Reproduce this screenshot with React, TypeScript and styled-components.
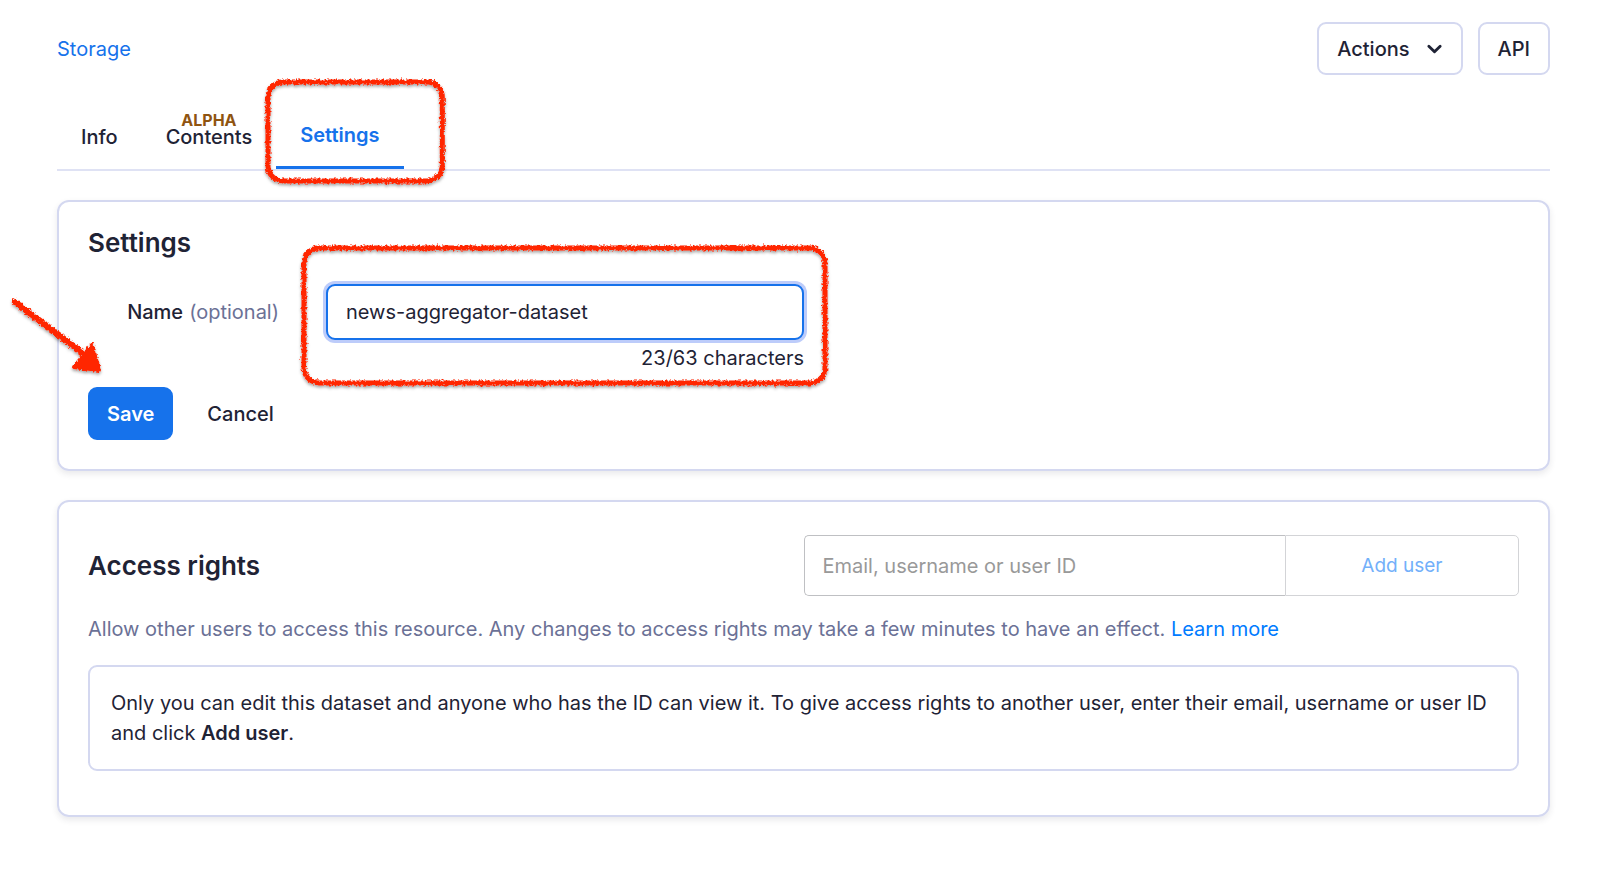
import React, { useState } from "react";
import styled, { createGlobalStyle, css } from "styled-components";

const ink = "#1f2335";
const muted = "#6b7196";
const blue = "#1672eb";
const line = "#d4d8f0";
const red = "#ff2600";

const GlobalStyle = createGlobalStyle`
  *, *::before, *::after { box-sizing: border-box; }
  body {
    margin: 0;
    background: #fff;
    color: ${ink};
    font: 400 20px/30px Inter, "Liberation Sans", sans-serif;
  }
  button, input { font: inherit; color: inherit; }
  h2, p { margin: 0; }
  a { text-decoration: none; }
`;

const Page = styled.main`
  padding: 22px 50px 32px 57px;
`;

const TopBar = styled.header`
  display: flex;
  align-items: center;
  justify-content: space-between;
`;

const TextLink = styled.a<{ $bright?: boolean }>`
  color: ${(p) => (p.$bright ? "#007bff" : blue)};
`;

const ButtonRow = styled.div<{ $gap: number }>`
  display: flex;
  gap: ${(p) => p.$gap}px;
`;

const FormActions = styled(ButtonRow)`
  margin-top: 14px;
`;

const variants = {
  outline: css`
    background: #fff;
    border-color: ${line};
  `,
  primary: css`
    background: ${blue};
    border-color: ${blue};
    color: #fff;
    font-weight: 600;
    padding: 0 17px;
  `,
  plain: css`
    background: none;
    border-color: transparent;
    padding: 0 14px;
  `,
};

const Button = styled.button<{ $variant: keyof typeof variants }>`
  display: flex;
  align-items: center;
  gap: 16px;
  height: 53px;
  padding: 0 18px;
  border: 2px solid;
  border-radius: 9px;
  font-weight: 500;
  cursor: pointer;
  ${(p) => variants[p.$variant]}
`;

const Chevron = styled.svg`
  width: 17px;
  height: 12px;
`;

const Tabs = styled.nav`
  display: flex;
  margin-top: 20px;
  border-bottom: 2px solid #dfe2f4;
`;

const Tab = styled.a<{ $active?: boolean }>`
  position: relative;
  display: flex;
  flex-direction: column;
  align-items: center;
  justify-content: flex-end;
  height: 74px;
  padding: 0 24px ${(p) => (p.$active ? 16 : 17)}px;
  color: ${(p) => (p.$active ? blue : ink)};
  border-bottom: ${(p) => (p.$active ? `3px solid ${blue}` : "0")};
  font-weight: ${(p) => (p.$active ? 600 : 500)};
`;

const TabText = styled.span`
  line-height: 20px;
  padding-bottom: 5px;
`;

const Badge = styled.span`
  margin-bottom: -1px;
  color: #8f5410;
  font-size: 16px;
  line-height: 16px;
  font-weight: 700;
`;

const Card = styled.section<{ $top: number }>`
  position: relative;
  margin-top: 29px;
  padding: ${(p) => p.$top}px 29px 29px;
  border: 2px solid ${line};
  border-radius: 12px;
  box-shadow: 0 3px 6px rgba(40, 40, 60, 0.1);
`;

const Title = styled.h2`
  font-size: 26px;
  line-height: 36px;
  font-weight: 600;
`;

const FieldRow = styled.div`
  display: grid;
  grid-template-columns: 191px 478px;
  column-gap: 47px;
  margin-top: 23px;
`;

const Label = styled.label`
  display: flex;
  align-items: center;
  justify-content: flex-end;
  gap: 6px;
  height: 56px;
  font-weight: 500;
`;

const Optional = styled.span`
  color: ${muted};
  font-weight: 400;
`;

const Field = styled.div`
  position: relative;
`;

const NameInput = styled.input`
  display: block;
  width: 100%;
  height: 56px;
  padding: 0 18px;
  border: 2px solid ${blue};
  border-radius: 9px;
  outline: 0;
  box-shadow: 0 0 0 3px #bdccfa;
`;

const Counter = styled.p`
  margin-top: 3px;
  text-align: right;
`;

const AccessHead = styled.div`
  display: grid;
  grid-template-columns: 1fr 1fr;
  align-items: center;
`;

const InviteForm = styled.form`
  display: grid;
  grid-template-columns: 481fr 234fr;
  height: 61px;
`;

const InviteInput = styled.input`
  min-width: 0;
  padding: 0 18px;
  border: 1px solid #bfc0c3;
  border-right: 0;
  border-radius: 5px 0 0 5px;
  &::placeholder { color: #999; opacity: 1; }
`;

const InviteButton = styled.button`
  border: 1px solid #d3d4d7;
  border-radius: 0 5px 5px 0;
  background: #fff;
  color: #73b0fa;
  font-size: 19px;
`;

const Description = styled.p`
  margin-top: 18px;
  color: ${muted};
`;

const Notice = styled.div`
  margin: 21px 0 15px;
  padding: 21px;
  border: 2px solid ${line};
  border-radius: 9px;
  min-height: 106px;
`;

const Strong = styled.strong`
  font-weight: 600;
`;

const frames = {
  tab: css`
    inset: -18px -44px -20px -13px;
  `,
  field: css`
    inset: -41px -26px -15px -27px;
  `,
};

const FrameBox = styled.span<{ $around: keyof typeof frames }>`
  position: absolute;
  ${(p) => frames[p.$around]}
  pointer-events: none;
  svg {
    display: block;
    width: 100%;
    height: 100%;
    overflow: visible;
  }
  rect {
    x: 5px;
    y: 5px;
    width: calc(100% - 10px);
    height: calc(100% - 10px);
  }
`;

const Arrow = styled.svg`
  position: absolute;
  left: -51px;
  top: 90px;
  width: 100px;
  height: 90px;
  overflow: visible;
  pointer-events: none;
`;

const Filters = styled.svg`
  position: absolute;
  width: 0;
  height: 0;
`;

/* Rough crayon edge and a soft drop shadow, shared by the frames and the arrow. */
function Crayon() {
  return (
    <Filters aria-hidden="true">
      <filter id="crayon" filterUnits="userSpaceOnUse" x="-10" y="-10" width="700" height="300">
        <feTurbulence type="fractalNoise" baseFrequency="0.45" numOctaves="2" seed="4" result="noise" />
        <feDisplacementMap in="SourceGraphic" in2="noise" scale="5" xChannelSelector="R" yChannelSelector="G" result="rough" />
        <feDropShadow in="rough" dx="0" dy="2" stdDeviation="1.5" floodColor="#000" floodOpacity="0.35" />
      </filter>
    </Filters>
  );
}

function HandFrame({ around }: { around: keyof typeof frames }) {
  return (
    <FrameBox $around={around} aria-hidden="true">
      <svg>
        <rect rx="15" fill="none" stroke={red} strokeWidth="5" filter="url(#crayon)" />
      </svg>
    </FrameBox>
  );
}

export default function App() {
  const [name, setName] = useState("news-aggregator-dataset");

  return (
    <Page>
      <GlobalStyle />
      <Crayon />
      <TopBar>
        <TextLink href="#storage">Storage</TextLink>
        <ButtonRow $gap={15}>
          <Button type="button" $variant="outline">
            Actions
            <Chevron viewBox="0 0 18 12" fill="none" stroke={ink} strokeWidth="3" strokeLinecap="round" strokeLinejoin="round">
              <path d="M3 3l6 6 6-6" />
            </Chevron>
          </Button>
          <Button type="button" $variant="outline">API</Button>
        </ButtonRow>
      </TopBar>

      <Tabs>
        <Tab href="#info"><TabText>Info</TabText></Tab>
        <Tab href="#contents">
          <Badge>ALPHA</Badge>
          <TabText>Contents</TabText>
        </Tab>
        <Tab href="#settings" $active aria-current="page">
          <TabText>Settings</TabText>
          <HandFrame around="tab" />
        </Tab>
      </Tabs>

      <Card $top={23}>
        <Title>Settings</Title>
        <FieldRow>
          <Label htmlFor="name">
            Name <Optional>(optional)</Optional>
          </Label>
          <Field>
            <NameInput id="name" maxLength={63} value={name} onChange={(e) => setName(e.target.value)} />
            <Counter>{name.length}/63 characters</Counter>
            <HandFrame around="field" />
          </Field>
        </FieldRow>
        <FormActions $gap={18}>
          <Button type="button" $variant="primary">Save</Button>
          <Button type="button" $variant="plain">Cancel</Button>
        </FormActions>
        <Arrow viewBox="0 0 100 90" aria-hidden="true">
          <g filter="url(#crayon)" stroke={red} fill={red} strokeLinejoin="round" strokeLinecap="round">
            <path d="M7 10L76 62" strokeWidth="6" />
            <path d="M91 78L84 53L66 75Z" strokeWidth="4" />
          </g>
        </Arrow>
      </Card>

      <Card $top={33}>
        <AccessHead>
          <Title>Access rights</Title>
          <InviteForm onSubmit={(e) => e.preventDefault()}>
            <InviteInput aria-label="Email, username or user ID" placeholder="Email, username or user ID" />
            <InviteButton type="submit" disabled>Add user</InviteButton>
          </InviteForm>
        </AccessHead>
        <Description>
          Allow other users to access this resource. Any changes to access rights may take a few minutes to have an effect.{" "}
          <TextLink href="#learn" $bright>Learn more</TextLink>
        </Description>
        <Notice>
          Only you can edit this dataset and anyone who has the ID can view it. To give access rights to another user, enter their
          email, username or user ID and click <Strong>Add user</Strong>.
        </Notice>
      </Card>
    </Page>
  );
}
